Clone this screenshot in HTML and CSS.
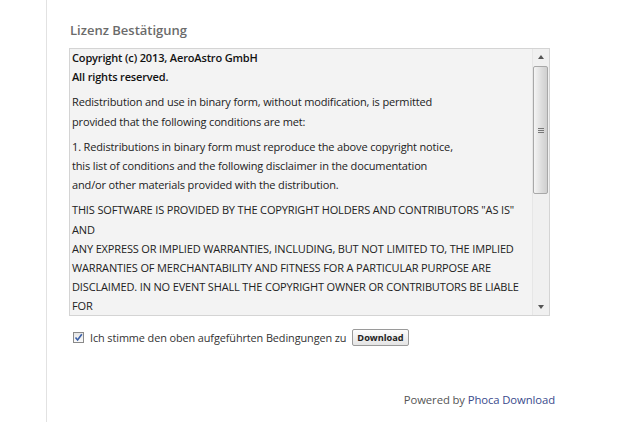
FILE: index.html
```html
<!DOCTYPE html>
<html lang="de">
<head>
<meta charset="utf-8">
<title>Lizenz Bestätigung</title>
<link rel="stylesheet" href="styles.css">
</head>
<body>
<div class="page">
  <h2 class="title">Lizenz Bestätigung</h2>
  <div class="license">
    <div class="license-text">
      <p class="strong">Copyright (c) 2013, AeroAstro GmbH<br>All rights reserved.</p>
      <p>Redistribution and use in binary form, without modification, is permitted<br>provided that the following conditions are met:</p>
      <p>1. Redistributions in binary form must reproduce the above copyright notice,<br>this list of conditions and the following disclaimer in the documentation<br>and/or other materials provided with the distribution.</p>
      <p>THIS SOFTWARE IS PROVIDED BY THE COPYRIGHT HOLDERS AND CONTRIBUTORS "AS IS"<br>AND<br>ANY EXPRESS OR IMPLIED WARRANTIES, INCLUDING, BUT NOT LIMITED TO, THE IMPLIED<br>WARRANTIES OF MERCHANTABILITY AND FITNESS FOR A PARTICULAR PURPOSE ARE<br>DISCLAIMED. IN NO EVENT SHALL THE COPYRIGHT OWNER OR CONTRIBUTORS BE LIABLE<br>FOR</p>
    </div>
    <div class="scrollbar">
      <div class="sb-btn"><span class="arrow-up"></span></div>
      <div class="sb-track">
        <div class="sb-thumb"><span class="grip"></span></div>
      </div>
      <div class="sb-btn"><span class="arrow-down"></span></div>
    </div>
  </div>
  <div class="agree">
    <span class="checkbox"><svg width="9" height="9" viewBox="0 0 9 9"><path d="M1.5 4.5 L3.6 7 L7.8 1.2" fill="none" stroke="#3a5fa8" stroke-width="1.6"/></svg></span>
    <span class="agree-label">Ich stimme den oben aufgeführten Bedingungen zu</span>
    <button class="btn">Download</button>
  </div>
  <div class="powered">Powered by <span class="phoca">Phoca Download</span></div>
</div>
</body>
</html>
```
FILE: styles.css
```css
html, body {
  margin: 0;
  padding: 0;
  background: #fff;
}
body {
  font-family: "Open Sans", "Liberation Sans", sans-serif;
  color: #333;
}
.page {
  margin-left: 46px;
  border-left: 1px solid #e2e2e2;
  min-height: 422px;
  padding: 20px 0 0 22px;
  width: 488px;
  box-sizing: content-box;
}
.title {
  margin: 0 0 8px 1px;
  font-size: 13px;
  font-weight: 600;
  color: #6b6b6b;
  line-height: 20px;
}
.license {
  display: flex;
  width: 481px;
  height: 268px;
  border: 1px solid #d4d4d4;
  background: #f3f3f3;
  box-sizing: border-box;
}
.license-text {
  flex: 1;
  overflow: hidden;
  padding: 0 0 0 2px;
  font-size: 11px;
  line-height: 19.2px;
  letter-spacing: -0.15px;
  color: #222;
}
.license-text p {
  margin: 0 0 6px 0;
}
.license-text .strong {
  font-weight: 600;
  color: #111;
  margin-top: -1px;
}
.scrollbar {
  width: 16px;
  display: flex;
  flex-direction: column;
  background: #f0f0f0;
  border-left: 1px solid #e6e6e6;
}
.sb-btn {
  height: 16px;
  display: flex;
  align-items: center;
  justify-content: center;
}
.arrow-up {
  width: 0; height: 0;
  border-left: 3.5px solid transparent;
  border-right: 3.5px solid transparent;
  border-bottom: 4px solid #555;
}
.arrow-down {
  width: 0; height: 0;
  border-left: 3.5px solid transparent;
  border-right: 3.5px solid transparent;
  border-top: 4px solid #555;
}
.sb-track {
  flex: 1;
}
.sb-thumb {
  margin: 1px 1px 0 0;
  height: 128px;
  border: 1px solid #a8a8a8;
  border-radius: 2px;
  background: linear-gradient(to right, #f4f4f4, #dcdcdc 60%, #cfcfcf);
  display: flex;
  align-items: center;
  justify-content: center;
  box-sizing: border-box;
}
.grip {
  width: 6px;
  height: 5px;
  border-top: 1px solid #777;
  border-bottom: 1px solid #777;
  box-sizing: border-box;
}
.grip::after {
  content: "";
  display: block;
  margin-top: 1px;
  height: 1px;
  background: #777;
}
.agree {
  display: flex;
  align-items: center;
  margin-top: 13px;
  padding-left: 4px;
  height: 17px;
}
.checkbox {
  width: 11px;
  height: 11px;
  border: 1px solid #8a8a8a;
  background: linear-gradient(#e6e6e6, #fafafa);
  box-sizing: border-box;
  display: flex;
  align-items: center;
  justify-content: center;
}
.agree-label {
  margin-left: 6px;
  font-size: 10.9px;
  color: #333;
  letter-spacing: -0.1px;
}
.btn {
  margin-left: 6px;
  height: 17px;
  padding: 0 4px;
  font-family: "Open Sans", "Liberation Sans", sans-serif;
  font-size: 9.2px;
  font-weight: 700;
  color: #222;
  border: 1px solid #9a9a9a;
  border-radius: 2px;
  background: linear-gradient(#fdfdfd, #e4e4e4);
  line-height: 15px;
}
.powered {
  margin-top: 46px;
  width: 486px;
  text-align: right;
  font-size: 11.3px;
  color: #555;
  letter-spacing: -0.1px;
}
.phoca {
  color: #3a4a8c;
}
```
